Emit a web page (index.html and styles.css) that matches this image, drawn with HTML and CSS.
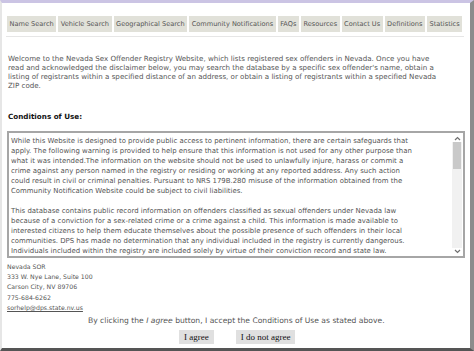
FILE: index.html
```html
<!DOCTYPE html>
<html>
<head>
<meta charset="utf-8">
<link rel="stylesheet" href="styles.css">
</head>
<body>
<div class="frame">
  <nav class="nav">
    <a class="tab">Name Search</a>
    <a class="tab">Vehicle Search</a>
    <a class="tab">Geographical Search</a>
    <a class="tab">Community Notifications</a>
    <a class="tab">FAQs</a>
    <a class="tab">Resources</a>
    <a class="tab">Contact Us</a>
    <a class="tab">Definitions</a>
    <a class="tab">Statistics</a>
  </nav>
  <div class="rule"></div>
  <p class="intro">Welcome to the Nevada Sex Offender Registry Website, which lists registered sex offenders in Nevada. Once you have<br>read and acknowledged the disclaimer below, you may search the database by a specific sex offender's name, obtain a<br>listing of registrants within a specified distance of an address, or obtain a listing of registrants within a specified Nevada<br>ZIP code.</p>
  <h2 class="cond">Conditions of Use:</h2>
  <div class="box">
    <div class="boxtext">
      <p>While this Website is designed to provide public access to pertinent information, there are certain safeguards that<br>apply. The following warning is provided to help ensure that this information is not used for any other purpose than<br>what it was intended.The information on the website should not be used to unlawfully injure, harass or commit a<br>crime against any person named in the registry or residing or working at any reported address. Any such action<br>could result in civil or criminal penalties. Pursuant to NRS 179B.280 misuse of the information obtained from the<br>Community Notification Website could be subject to civil liabilities.</p>
      <p>This database contains public record information on offenders classified as sexual offenders under Nevada law<br>because of a conviction for a sex-related crime or a crime against a child. This information is made available to<br>interested citizens to help them educate themselves about the possible presence of such offenders in their local<br>communities. DPS has made no determination that any individual included in the registry is currently dangerous.<br>Individuals included within the registry are included solely by virtue of their conviction record and state law.</p>
    </div>
    <div class="scroll">
      <svg class="arrow" width="9" height="7" viewBox="0 0 9 7"><path d="M2 5 L4.5 2.5 L7 5" fill="none" stroke="#707070" stroke-width="1.2"/></svg>
      <div class="track"><div class="thumb"></div></div>
      <svg class="arrow" width="9" height="7" viewBox="0 0 9 7"><path d="M2 2 L4.5 4.5 L7 2" fill="none" stroke="#707070" stroke-width="1.2"/></svg>
    </div>
  </div>
  <address class="addr">
    Nevada SOR<br>
    333 W. Nye Lane, Suite 100<br>
    Carson City, NV 89706<br>
    775-684-6262<br>
    <a class="mail">sorhelp@dps.state.nv.us</a>
  </address>
  <p class="accept">By clicking the <i>I agree</i> button, I accept the Conditions of Use as stated above.</p>
  <div class="buttons">
    <button class="btn">I agree</button>
    <button class="btn">I do not agree</button>
  </div>
</div>
</body>
</html>
```
FILE: styles.css
```css
html, body {
  margin: 0;
  padding: 0;
  background: #fff;
}
.frame {
  box-sizing: border-box;
  width: 474px;
  height: 351px;
  border-top: 3px solid #cbc4e4;
  border-left: 2px solid #e6e6e6;
  border-right: 4px solid #8c8c8c;
  border-bottom: 3px solid #555;
  font-family: "DejaVu Sans", Verdana, sans-serif;
  color: #555;
  overflow: hidden;
  display: flex;
  flex-direction: column;
}
.nav {
  display: flex;
  gap: 2px;
  margin: 13px 0 0 5px;
  height: 16px;
}
.tab {
  background: #e1e1d9;
  font-size: 6.6px;
  line-height: 16px;
  padding: 0 2.5px;
  color: #555;
  white-space: nowrap;
}
.rule {
  height: 1px;
  background: #e6e6e6;
  margin: 4px 6px 0 4px;
}
.intro {
  margin: 17px 0 0 6px;
  font-size: 7.1px;
  line-height: 9px;
  white-space: nowrap;
}
.cond {
  margin: 22px 0 0 6px;
  font-size: 7.2px;
  font-weight: bold;
  color: #111;
  line-height: 9px;
}
.box {
  margin: 10px 5px 0 5px;
  height: 127px;
  flex: none;
  box-sizing: border-box;
  border: 2px solid #a6a6a6;
  display: flex;
}
.boxtext {
  flex: 1;
  overflow: hidden;
  padding: 3px 0 0 2px;
  font-size: 6.95px;
  line-height: 10px;
  white-space: nowrap;
}
.boxtext p {
  margin: 0 0 10px 0;
}
.scroll {
  width: 10px;
  margin: 2px 1px 1px 0;
  display: flex;
  flex-direction: column;
  align-items: center;
}
.arrow { display: block; flex: none; }
.track {
  flex: 1;
  width: 10px;
  background: #f1f1f1;
}
.thumb {
  height: 27px;
  background: #c9c9c9;
  margin: 0 1px;
}
.addr {
  font-style: normal;
  margin: 4px 0 0 5px;
  font-size: 6.2px;
  line-height: 10.2px;
}
.mail {
  color: #555;
  text-decoration: underline;
}
.accept {
  margin: 3px 0 0 86px;
  font-size: 7.6px;
  line-height: 10px;
}
.buttons {
  display: flex;
  gap: 22px;
  margin: 4px 0 0 177px;
}
.btn {
  font-family: "Liberation Serif", "Times New Roman", serif;
  font-size: 9px;
  height: 14px;
  padding: 0 5px;
  border: none;
  background: #e0e0e0;
  color: #111;
  line-height: 14px;
}
```
